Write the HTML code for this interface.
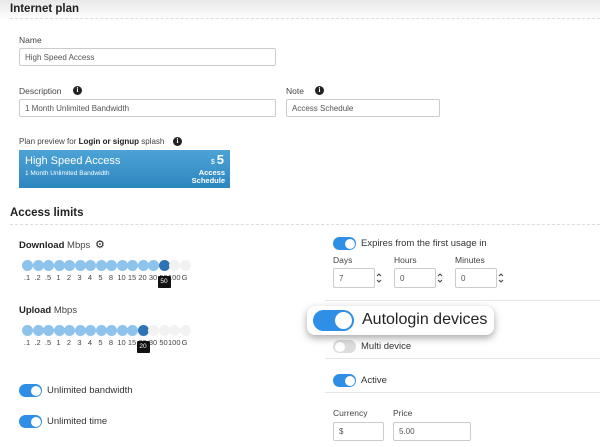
<!DOCTYPE html>
<html><head><style>
*{box-sizing:border-box;margin:0;padding:0}
body{width:600px;height:447px;overflow:hidden;background:#fff;font-family:"Liberation Sans",sans-serif;color:#333;position:relative}
.a{position:absolute;white-space:nowrap}
.h{font-weight:bold;font-size:11.5px;color:#222}
.dash{position:absolute;left:10px;right:0;border-top:1px dashed #ddd}
.lbl{font-size:8.5px;color:#444}
.inp{position:absolute;border:1px solid #ccc;border-radius:2px;font-size:8px;color:#555;padding:0 5px;background:#fff;display:flex;align-items:center}
.info{position:absolute;width:9px;height:9px;border-radius:50%;background:#222;color:#fff;font-size:7px;font-weight:bold;text-align:center;line-height:9px;font-family:"Liberation Serif",serif}
.tg{position:absolute;width:23px;height:13px;border-radius:7px;background:#2f8ee5}
.tg::after{content:"";position:absolute;right:1.5px;top:1.5px;width:10px;height:10px;border-radius:50%;background:#fff}
.tg.off{background:#ddd}.tg.off::after{left:1.5px;right:auto}
.dot{position:absolute;width:11px;height:11px;border-radius:50%}
.tick{position:absolute;font-size:7.5px;color:#444;width:12px;text-align:center}
.tip{position:absolute;background:#111;color:#fff;font-size:6.5px;width:13px;height:12px;line-height:12px;text-align:center;border-radius:1px}
.hr{position:absolute;left:325px;right:0;border-top:1px solid #e6e6e6}
.sp{position:absolute;width:10px;height:20px;background:#f7f7f7}
</style></head><body>
<div class="a" style="left:0;top:0;width:600px;height:20px;background:linear-gradient(#e8e8e8,#fff)"></div>
<div class="a h" style="left:10px;top:3px">Internet plan</div>
<div class="dash" style="top:18px"></div>

<div class="a lbl" style="left:19px;top:35px">Name</div>
<div class="inp" style="left:19px;top:48px;width:257px;height:18px">High Speed Access</div>
<div class="a lbl" style="left:19px;top:86px">Description</div>
<div class="info" style="left:73px;top:86px">i</div>
<div class="inp" style="left:19px;top:99px;width:257px;height:18px">1 Month Unlimited Bandwidth</div>
<div class="a lbl" style="left:286px;top:86px">Note</div>
<div class="info" style="left:315px;top:86px">i</div>
<div class="inp" style="left:286px;top:99px;width:154px;height:18px">Access Schedule</div>
<div class="a lbl" style="left:19px;top:137px;font-size:8px">Plan preview for <b style="color:#222">Login or signup</b> splash</div>
<div class="info" style="left:173px;top:137px">i</div>
<div class="a" style="left:19px;top:150px;width:211px;height:38px;background:linear-gradient(#4da3d6,#2d86bf);color:#fff">
 <div class="a" style="left:6px;top:5px;font-size:11px">High Speed Access</div>
 <div class="a" style="left:6px;top:20px;font-size:6.5px">1 Month Unlimited Bandwidth</div>
 <div class="a" style="right:6px;top:2px;font-size:13px;font-weight:bold"><span style="font-size:7px;font-weight:normal">$ </span>5</div>
 <div class="a" style="right:5px;top:19px;font-size:7.5px;font-weight:bold;text-align:right;line-height:8px">Access<br>Schedule</div>
</div>

<div class="a h" style="left:10px;top:207px">Access limits</div>
<div class="dash" style="top:224px"></div>

<div class="a lbl" style="left:19px;top:240px;font-size:9.5px"><b style="color:#222">Download</b> Mbps</div>
<div class="a" style="left:95px;top:238px;font-size:11px;color:#222">⚙</div>
<div id="dl"></div>
<div class="a lbl" style="left:19px;top:305px;font-size:9.5px"><b style="color:#222">Upload</b> Mbps</div>
<div id="ul"></div>

<div class="tg" style="left:19px;top:384px"></div>
<div class="a" style="left:47px;top:385px;font-size:9.5px">Unlimited bandwidth</div>
<div class="tg" style="left:19px;top:415px"></div>
<div class="a" style="left:47px;top:416px;font-size:9.5px">Unlimited time</div>

<div class="tg" style="left:333px;top:237px"></div>
<div class="a" style="left:361px;top:238px;font-size:9.5px">Expires from the first usage in</div>
<div class="a lbl" style="left:333px;top:255px">Days</div>
<div class="a lbl" style="left:394px;top:255px">Hours</div>
<div class="a lbl" style="left:455px;top:255px">Minutes</div>
<div class="inp" style="left:333px;top:268px;width:42px;height:20px">7</div>
<div class="inp" style="left:394px;top:268px;width:42px;height:20px">0</div>
<div class="inp" style="left:455px;top:268px;width:42px;height:20px">0</div>
<svg class="a" style="left:374px;top:268px" width="140" height="20">
 <g fill="none" stroke="#444" stroke-width="1.1">
  <path d="M3 8 L5 6 L7 8 M3 12 L5 14 L7 12"/>
  <path d="M64 8 L66 6 L68 8 M64 12 L66 14 L68 12"/>
  <path d="M125 8 L127 6 L129 8 M125 12 L127 14 L129 12"/>
 </g>
</svg>
<div class="hr" style="top:300px"></div>

<div class="tg off" style="left:333px;top:340px"></div>
<div class="a" style="left:361px;top:341px;font-size:9.5px">Multi device</div>
<div class="hr" style="top:358px"></div>
<div class="tg" style="left:333px;top:374px"></div>
<div class="a" style="left:361px;top:375px;font-size:9.5px">Active</div>
<div class="hr" style="top:392px"></div>
<div class="a lbl" style="left:333px;top:408px">Currency</div>
<div class="a lbl" style="left:393px;top:408px">Price</div>
<div class="inp" style="left:333px;top:422px;width:51px;height:19px">$</div>
<div class="inp" style="left:393px;top:422px;width:78px;height:19px">5.00</div>

<div class="a" style="left:307px;top:306px;width:187px;height:29px;background:#fff;border-radius:8px;box-shadow:0 3px 8px rgba(0,0,0,.35)"></div>
<div class="a" style="left:313px;top:310px;width:41px;height:21px;border-radius:11px;background:#2f8ee5"><div class="a" style="right:2px;top:2px;width:17px;height:17px;border-radius:50%;background:#fff"></div></div>
<div class="a" style="left:362px;top:311px;font-size:16px;color:#222">Autologin devices</div>

<script>
function slider(id,y,ty,sel){
 var ticks=['.1','.2','.5','1','2','3','4','5','8','10','15','20','30','50','100','G'],h='';
 for(var i=0;i<16;i++){var x=22+i*10.5;var c=i<sel?'#8ec3ec':(i==sel?'#2e74b5':'#f2f2f2');
 h+='<div class="dot" style="left:'+x+'px;top:'+y+'px;background:'+c+'"></div>';
 h+='<div class="tick" style="left:'+(x-1)+'px;top:'+(y+13)+'px">'+ticks[i]+'</div>';}
 var tx=22+sel*10.5-1;
 h+='<div class="tip" style="left:'+tx+'px;top:'+ty+'px">'+ticks[sel]+'</div>';
 document.getElementById(id).innerHTML=h;}
slider('dl',260,276,13);slider('ul',325,341,11);
</script>
</body></html>
